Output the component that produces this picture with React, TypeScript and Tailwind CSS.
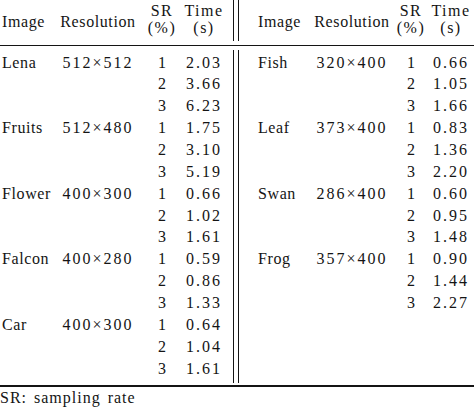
import React from "react";

type Group = { name: string; res: string; times: string[] };

const left: Group[] = [
  { name: "Lena", res: "512×512", times: ["2.03", "3.66", "6.23"] },
  { name: "Fruits", res: "512×480", times: ["1.75", "3.10", "5.19"] },
  { name: "Flower", res: "400×300", times: ["0.66", "1.02", "1.61"] },
  { name: "Falcon", res: "400×280", times: ["0.59", "0.86", "1.33"] },
  { name: "Car", res: "400×300", times: ["0.64", "1.04", "1.61"] },
];

const right: Group[] = [
  { name: "Fish", res: "320×400", times: ["0.66", "1.05", "1.66"] },
  { name: "Leaf", res: "373×400", times: ["0.83", "1.36", "2.20"] },
  { name: "Swan", res: "286×400", times: ["0.60", "0.95", "1.48"] },
  { name: "Frog", res: "357×400", times: ["0.90", "1.44", "2.27"] },
];

function Rows({ groups }: { groups: Group[] }) {
  const cells: React.ReactNode[] = [];
  groups.forEach((g) => {
    g.times.forEach((t, i) => {
      cells.push(
        <div key={g.name + i + "a"} className="text-left tracking-[0.6px]">{i === 0 ? g.name : ""}</div>,
        <div key={g.name + i + "b"} className="text-center tracking-[2px]">{i === 0 ? g.res : ""}</div>,
        <div key={g.name + i + "c"} className="text-center">{i + 1}</div>,
        <div key={g.name + i + "d"} className="text-center tracking-[2px]">{t}</div>
      );
    });
  });
  return <>{cells}</>;
}

function Header() {
  return (
    <>
      <div className="text-left self-center tracking-[0.6px]">Image</div>
      <div className="text-center self-center tracking-[0.6px]">Resolution</div>
      <div className="text-center tracking-[1.5px]">SR<br />(%)</div>
      <div className="text-center tracking-[1.5px]">Time<br />(s)</div>
    </>
  );
}

export default function App() {
  return (
    <div className="w-[474px] h-[407px] bg-white text-[#141414] text-[16px] overflow-hidden font-['Liberation_Serif',serif]">
      {/* header */}
      <div className="flex h-[41px]">
        <div className="w-[233px] pl-[2px] pt-[2px] grid grid-cols-[54px_84px_44px_40px] leading-[17px]">
          <Header />
        </div>
        <div className="w-[6px] border-l-[1.3px] border-r-[1.3px] border-[#141414]" />
        <div className="flex-1 pl-[19px] pt-[2px] grid grid-cols-[52px_84px_34px_46px] leading-[17px]">
          <Header />
        </div>
      </div>
      <div className="h-[3.5px]" />
      <div className="h-[1.5px] bg-[#141414]" />
      <div className="h-[4px]" />
      {/* body */}
      <div className="flex h-[333px]">
        <div className="w-[233px] pl-[2px] pt-[1.5px] grid grid-cols-[54px_84px_44px_40px] auto-rows-[21.86px] content-start leading-[21.86px]">
          <Rows groups={left} />
        </div>
        <div className="w-[6px] border-l-[1.3px] border-r-[1.3px] border-[#141414]" />
        <div className="flex-1 pl-[19px] pt-[1.5px] grid grid-cols-[52px_84px_34px_46px] auto-rows-[21.86px] content-start leading-[21.86px]">
          <Rows groups={right} />
        </div>
      </div>
      <div className="h-[2px]" />
      <div className="h-[2px] bg-[#141414]" />
      <div className="pt-[2px] leading-[17px] tracking-[1px] [word-spacing:2px]">SR: sampling rate</div>
    </div>
  );
}
